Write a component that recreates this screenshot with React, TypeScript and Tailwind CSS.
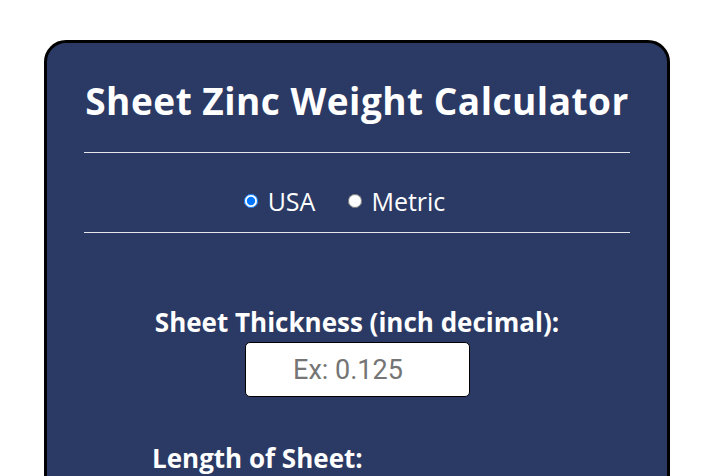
import React, { useState } from "react";

export default function App() {
  const [unit, setUnit] = useState("usa");

  return (
    <div className="min-h-screen bg-white pt-[40px]" style={{ fontFamily: "'Open Sans', Lato, sans-serif" }}>
      <div className="ml-[44px] w-[626px] rounded-[22px] border-[3px] border-black bg-[#2b3a64] px-[37px] pb-10 text-white">
        {/* Title */}
        <h1 className="whitespace-nowrap pt-[34px] pb-[27px] text-center text-[37px] leading-[48px] font-bold tracking-[0.5px]">
          Sheet Zinc Weight Calculator
        </h1>
        <hr className="border-0 border-t border-[#e5e7ef]" />

        {/* Units */}
        <div className="flex items-center justify-center gap-[33px] pt-[33px] pb-[16px] pr-[25px] text-[25px] leading-[30px]">
          <label className="flex items-center gap-[10px]">
            <input
              type="radio"
              name="unit"
              checked={unit === "usa"}
              onChange={() => setUnit("usa")}
              className="m-0 h-[14px] w-[14px]"
            />
            <span>USA</span>
          </label>
          <label className="flex items-center gap-[9px]">
            <input
              type="radio"
              name="unit"
              checked={unit === "metric"}
              onChange={() => setUnit("metric")}
              className="m-0 h-[14px] w-[14px]"
            />
            <span>Metric</span>
          </label>
        </div>
        <hr className="border-0 border-t border-[#e5e7ef]" />

        {/* Fields */}
        <div className="mx-auto w-[410px] pt-[72px]">
          <div className="flex flex-col items-center">
            <label className="whitespace-nowrap text-[26px] leading-[34px] font-bold">Sheet Thickness (inch decimal):</label>
            <input
              type="text"
              placeholder="Ex: 0.125"
              className="mt-[3px] h-[55px] w-[225px] rounded-[5px] border border-black bg-white pr-[18px] text-center font-[Roboto] text-[27px] text-black placeholder:text-[#757575] outline-none"
            />
          </div>
          <div className="pt-[44px]">
            <label className="whitespace-nowrap text-[26px] leading-[34px] font-bold">Length of Sheet:</label>
          </div>
        </div>
      </div>
    </div>
  );
}
